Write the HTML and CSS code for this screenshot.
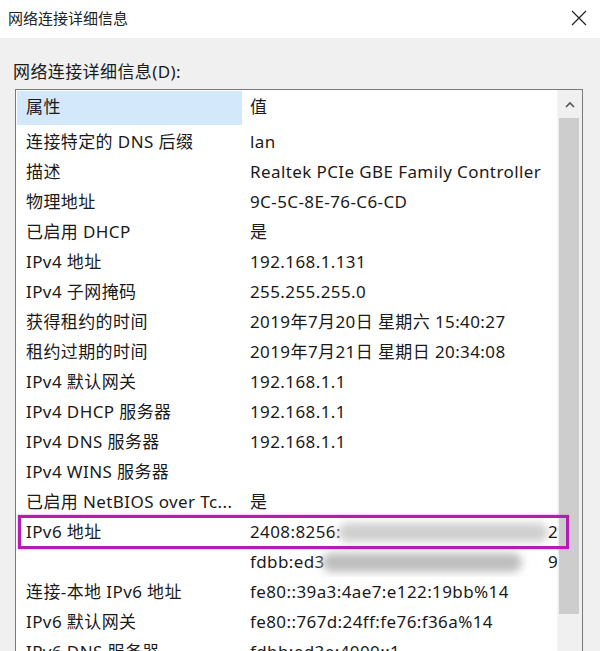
FILE: index.html
```html
<!DOCTYPE html>
<html lang="zh-CN">
<head>
    <meta charset="UTF-8">
    <title>网络连接详细信息</title>
    <link rel="stylesheet" href="styles.css">
</head>
<body>

    <div class="titlebar">
        <span class="title">网络连接详细信息</span>
        <svg class="close" width="16" height="16" viewBox="0 0 16 16">
            <path d="M1 1 L15 15 M15 1 L1 15" stroke="#222" stroke-width="1.2" fill="none"/>
        </svg>
    </div>

    <div class="content">
        <div class="label">网络连接详细信息(D):</div>

        <div class="listbox">
            <div class="rows">
                <div class="row header">
                    <div class="prop selected">属性</div>
                    <div class="val">值</div>
                </div>
                <div class="row"><div class="prop">连接特定的 DNS 后缀</div><div class="val">lan</div></div>
                <div class="row"><div class="prop">描述</div><div class="val">Realtek PCIe GBE Family Controller</div></div>
                <div class="row"><div class="prop">物理地址</div><div class="val">9C-5C-8E-76-C6-CD</div></div>
                <div class="row"><div class="prop">已启用 DHCP</div><div class="val">是</div></div>
                <div class="row"><div class="prop">IPv4 地址</div><div class="val">192.168.1.131</div></div>
                <div class="row"><div class="prop">IPv4 子网掩码</div><div class="val">255.255.255.0</div></div>
                <div class="row"><div class="prop">获得租约的时间</div><div class="val">2019年7月20日 星期六 15:40:27</div></div>
                <div class="row"><div class="prop">租约过期的时间</div><div class="val">2019年7月21日 星期日 20:34:08</div></div>
                <div class="row"><div class="prop">IPv4 默认网关</div><div class="val">192.168.1.1</div></div>
                <div class="row"><div class="prop">IPv4 DHCP 服务器</div><div class="val">192.168.1.1</div></div>
                <div class="row"><div class="prop">IPv4 DNS 服务器</div><div class="val">192.168.1.1</div></div>
                <div class="row"><div class="prop">IPv4 WINS 服务器</div><div class="val"></div></div>
                <div class="row"><div class="prop">已启用 NetBIOS over Tc...</div><div class="val">是</div></div>
                <div class="row">
                    <div class="prop">IPv6 地址</div>
                    <div class="val masked">2408:8256:<span class="smudge"></span><span class="tail">2</span></div>
                </div>
                <div class="row">
                    <div class="prop"></div>
                    <div class="val masked">fdbb:ed3<span class="smudge short"></span><span class="tail">9l</span></div>
                </div>
                <div class="row"><div class="prop">连接-本地 IPv6 地址</div><div class="val">fe80::39a3:4ae7:e122:19bb%14</div></div>
                <div class="row"><div class="prop">IPv6 默认网关</div><div class="val">fe80::767d:24ff:fe76:f36a%14</div></div>
                <div class="row"><div class="prop">IPv6 DNS 服务器</div><div class="val">fdbb:ed3e:4000::1</div></div>
            </div>

            <div class="scrollbar">
                <div class="arrow">
                    <svg width="10" height="7" viewBox="0 0 10 7">
                        <path d="M1 6 L5 2 L9 6" stroke="#555" stroke-width="1.6" fill="none"/>
                    </svg>
                </div>
                <div class="thumb"></div>
                <div class="track"></div>
            </div>

            <!-- annotation box -->
            <div class="highlight"></div>
        </div>
    </div>

</body>
</html>
```

FILE: styles.css
```css
body {
    margin: 0;
    padding: 0;
    height: 651px;
    overflow: hidden;
    font-family: "Noto Sans", "Noto Sans CJK SC", sans-serif;
    font-size: 17px;
    letter-spacing: 0.4px;
    color: #1a1a1a;
    background-color: #f0f0f0;
}

.titlebar {
    height: 38px;
    background-color: #ffffff;
    display: flex;
    align-items: center;
    justify-content: space-between;
    padding: 0 13px 4px 8px;
    box-sizing: border-box;
}

.title {
    font-size: 15px;
    letter-spacing: 0;
    color: #222;
}

.close {
    margin-top: 2px;
}

.content {
    padding: 0 17px 0 15px;
}

.label {
    padding-top: 20px;
    margin-left: -2px;
    height: 31px;
    line-height: 28px;
}

.listbox {
    position: relative;
    display: flex;
    border: 1px solid #7a7a7a;
    background-color: #ffffff;
    height: 600px;
}

.rows {
    flex: 1;
    padding-top: 1px;
}

.row {
    display: flex;
    height: 30px;
    line-height: 30px;
    white-space: nowrap;
}

.row.header {
    height: 34px;
    line-height: 32px;
    margin-bottom: 2px;
}

.prop {
    width: 225px;
    padding-left: 9px;
    margin-left: 1px;
    box-sizing: border-box;
}

.prop.selected {
    background-color: #d3e8fa;
}

.val {
    padding-left: 8px;
}

.val.masked {
    position: relative;
    flex: 1;
    overflow: hidden;
}

.smudge {
    position: absolute;
    left: 96px;
    top: 6px;
    width: 210px;
    height: 19px;
    border-radius: 10px;
    background-color: #cfcfcf;
    filter: blur(4px);
}

.smudge.short {
    left: 80px;
    width: 200px;
    background-color: #bdbdbd;
}

.tail {
    position: absolute;
    left: 306px;
}

.scrollbar {
    width: 24px;
    display: flex;
    flex-direction: column;
    background-color: #f0f0f0;
    border-left: 1px solid #f5f5f5;
}

.arrow {
    height: 28px;
    display: flex;
    align-items: center;
    justify-content: center;
}

.thumb {
    height: 496px;
    margin: 0 3px 0 1px;
    background-color: #cdcdcd;
}

.track {
    flex: 1;
}

.highlight {
    position: absolute;
    left: 2px;
    top: 425px;
    width: 551px;
    height: 34px;
    border: 3px solid #b41cb4;
    box-sizing: border-box;
    box-shadow: 0 0 2px #e070e0;
}
```
